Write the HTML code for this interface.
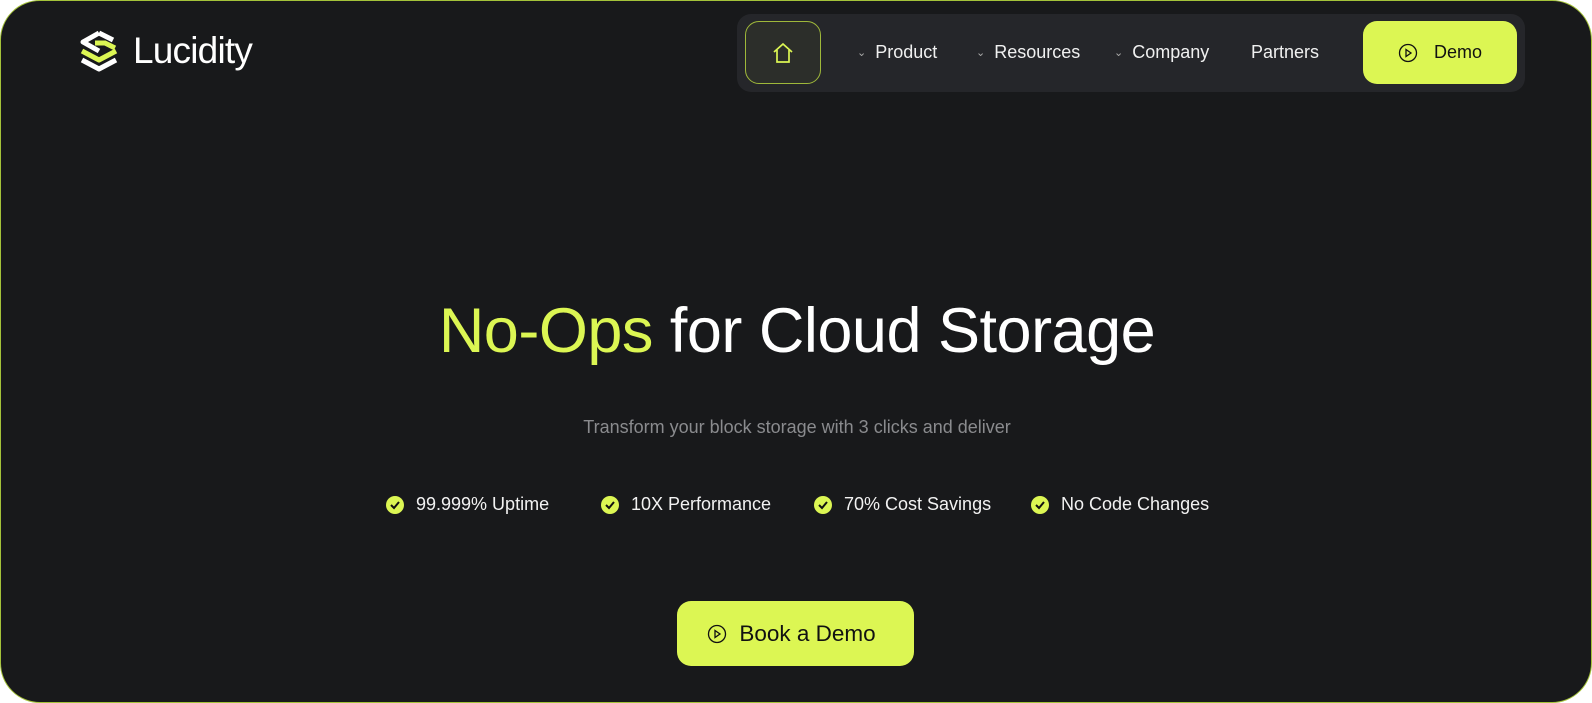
<!DOCTYPE html>
<html><head><style>
*{margin:0;padding:0;box-sizing:border-box}
body{width:1592px;height:703px;background:#fff;font-family:"Liberation Sans",sans-serif;overflow:hidden}
.card{position:absolute;left:0;top:0;width:1592px;height:703px;background:#18191b;border:1.5px solid #a4c23a;border-radius:40px;overflow:hidden}
.logo{position:absolute;left:76px;top:29px;display:flex;align-items:center;gap:10px;color:#fff;font-size:37px;letter-spacing:-0.8px}
.nav{position:absolute;left:736px;top:13px;width:788px;height:78px;background:#25262a;border-radius:14px}
.home{position:absolute;left:8px;top:7px;width:76px;height:63px;border:1px solid #9fb83a;border-radius:14px;background:#2c2e2a;display:flex;align-items:center;justify-content:center}
.item{position:absolute;top:28px;color:#f0f0f0;font-size:18px}
.item .c{font-size:11px;color:#aaa;margin-right:9px;position:relative;top:-2px}
.demo{position:absolute;left:626px;top:7px;width:154px;height:63px;background:#dcf653;border-radius:14px;display:flex;align-items:center;justify-content:center;gap:16px;font-size:18px;color:#111}
h1{position:absolute;top:294px;left:0;width:1592px;text-align:center;font-weight:normal;font-size:63px;color:#fff;letter-spacing:-0.5px}
h1 span{color:#dcf653}
.sub{position:absolute;top:416px;width:1592px;text-align:center;color:#8a8b8e;font-size:18px}
.f{position:absolute;top:493px;display:flex;align-items:center;gap:11px;color:#f2f2f2;font-size:18px}
.btn{position:absolute;left:676px;top:600px;width:237px;height:65px;background:#dcf653;border-radius:14px;display:flex;align-items:center;justify-content:center;gap:12px;font-size:22.5px;color:#111;padding-right:8px}
</style></head><body>
<div class="card">
<div class="logo">
<svg width="46" height="42" viewBox="0 0 46 42"><path d="M22 3 L6 12 L22 21" fill="none" stroke="#fff" stroke-width="5" stroke-linejoin="round"/><path d="M22 3 L36 10" stroke="#fff" stroke-width="5" fill="none"/><path d="M18 13 L28 13 L38 18" stroke="#dcf653" stroke-width="5" fill="none"/><path d="M5 21 L22 30 L39 21" fill="none" stroke="#dcf653" stroke-width="5" stroke-linejoin="round"/><path d="M5 30 L22 39 L39 30" fill="none" stroke="#fff" stroke-width="5" stroke-linejoin="round"/></svg>
<span>Lucidity</span></div>
<div class="nav">
<div class="home"><svg width="24" height="24" viewBox="0 0 24 24" fill="none" stroke="#dcf653" stroke-width="1.7"><path d="M3 11 L12 3 L21 11 M6 9 V21 H18 V9"/></svg></div>
<div class="item" style="left:120px"><span class="c">⌄</span>Product</div>
<div class="item" style="left:239px"><span class="c">⌄</span>Resources</div>
<div class="item" style="left:377px"><span class="c">⌄</span>Company</div>
<div class="item" style="left:514px">Partners</div>
<div class="demo"><svg width="20" height="20" viewBox="0 0 20 20" fill="none" stroke="#111" stroke-width="1.3"><circle cx="10" cy="10" r="8.5"/><path d="M8 6.5 L13 10 L8 13.5Z"/></svg>Demo</div>
</div>
<h1><span>No-Ops</span> for Cloud Storage</h1>
<div class="sub">Transform your block storage with 3 clicks and deliver</div>
<div class="f" style="left:384px"><svg width="20" height="20" viewBox="0 0 20 20"><circle cx="10" cy="10" r="9" fill="#dcf653"/><path d="M6 10 L9 13 L14 7" stroke="#111" stroke-width="2" fill="none"/></svg>99.999% Uptime</div>
<div class="f" style="left:599px"><svg width="20" height="20" viewBox="0 0 20 20"><circle cx="10" cy="10" r="9" fill="#dcf653"/><path d="M6 10 L9 13 L14 7" stroke="#111" stroke-width="2" fill="none"/></svg>10X Performance</div>
<div class="f" style="left:812px"><svg width="20" height="20" viewBox="0 0 20 20"><circle cx="10" cy="10" r="9" fill="#dcf653"/><path d="M6 10 L9 13 L14 7" stroke="#111" stroke-width="2" fill="none"/></svg>70% Cost Savings</div>
<div class="f" style="left:1029px"><svg width="20" height="20" viewBox="0 0 20 20"><circle cx="10" cy="10" r="9" fill="#dcf653"/><path d="M6 10 L9 13 L14 7" stroke="#111" stroke-width="2" fill="none"/></svg>No Code Changes</div>
<div class="btn"><svg width="20" height="20" viewBox="0 0 20 20" fill="none" stroke="#111" stroke-width="1.3"><circle cx="10" cy="10" r="8.5"/><path d="M8 6.5 L13 10 L8 13.5Z"/></svg>Book a Demo</div>
</div>
</body></html>
